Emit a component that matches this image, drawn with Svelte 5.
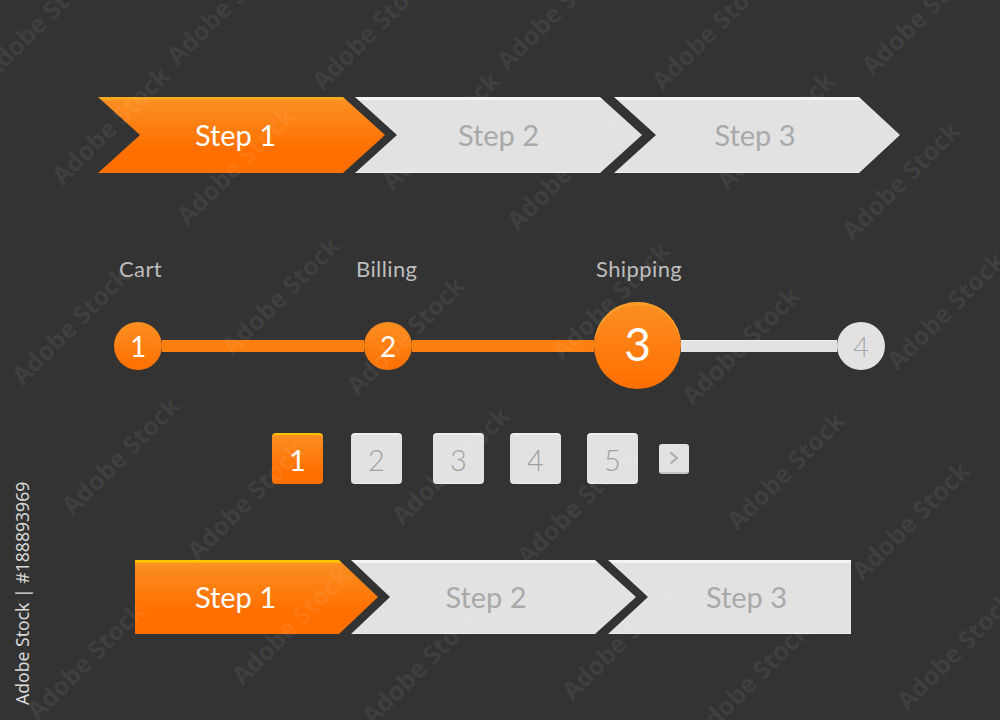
<script>
  const marks = [
    [40,20],[225,5],[370,30],[555,10],[710,30],[920,15],
    [110,125],[235,165],[440,130],[565,170],[775,130],[900,180],
    [70,325],[280,295],[405,335],[610,300],[740,345],[945,310],
    [120,455],[245,500],[450,465],[575,505],[785,470],[910,520],
    [85,660],[290,625],[420,665],[620,640],[750,680],[955,650]
  ]
  const steps = ['Step 1', 'Step 2', 'Step 3']
  const pages = [1, 2, 3, 4, 5]
</script>

<main class="page">
  <div class="steps top">
    {#each steps as step, i}
      <div class="step" class:active={i === 0}>{step}</div>
    {/each}
  </div>

  <div class="labels">
    <span class="cart">Cart</span>
    <span class="billing">Billing</span>
    <span>Shipping</span>
  </div>

  <div class="progress">
    <div class="dot on">1</div>
    <div class="seg on s1"></div>
    <div class="dot on">2</div>
    <div class="seg on s2"></div>
    <div class="dot on big">3</div>
    <div class="seg s3"></div>
    <div class="dot">4</div>
  </div>

  <div class="pager">
    {#each pages as p, i}
      <div class="page-btn p{p}" class:on={i === 0}>{p}</div>
    {/each}
    <div class="next">
      <svg width="12" height="14" viewBox="0 0 12 14"><path d="M2.5 1.5 9 7 2.5 12.5" fill="none" stroke="#aaa" stroke-width="2"/></svg>
    </div>
  </div>

  <div class="steps bottom">
    {#each steps as step, i}
      <div class="step" class:active={i === 0}>{step}</div>
    {/each}
  </div>
</main>

<div class="marks">
  {#each marks as [x, y]}
    <span class="mark" style="left:{x}px;top:{y}px">Adobe Stock</span>
  {/each}
</div>
<div class="side">Adobe Stock | #188893969</div>

<style>
  :global(body) {
    background: #333333;
  }
  .page {
    width: 1000px;
    height: 720px;
    box-sizing: border-box;
    padding-top: 97px;
    overflow: hidden;
    font-family: Lato, "Noto Sans", sans-serif;
    background: #333333;
  }

  .steps {
    display: flex;
    height: 76px;
  }
  .step {
    display: flex;
    align-items: center;
    justify-content: center;
    height: 100%;
    box-sizing: border-box;
    padding-bottom: 2px;
    font-size: 29px;
    color: #a9a9a9;
    background: linear-gradient(#f4f4f4 0 3px, #e2e2e2 3px, #e2e2e2 calc(100% - 1px), #ededed calc(100% - 1px));
  }
  .step.active {
    color: #fff;
    background: linear-gradient(#ffa51e 0 3px, #fb8f22 3px, #ff6f00 70%);
  }

  .top {
    margin-left: 98px;
  }
  .top .step {
    width: 287px;
    clip-path: polygon(0 0, 245px 0, 100% 50%, 245px 100%, 0 100%, 42px 50%);
  }
  .top .step.active {
    padding-right: 12px;
  }
  .top .step + .step {
    margin-left: -30px;
  }
  .top .step:last-child {
    margin-left: -28px;
    width: 286px;
    padding-right: 4px;
  }

  .bottom {
    height: 74px;
    margin-top: 76px;
    margin-left: 135px;
  }
  .bottom .step {
    width: 285px;
    padding-right: 15px;
    clip-path: polygon(0 0, 244px 0, 100% 50%, 244px 100%, 0 100%, 39px 50%);
  }
  .bottom .step.active {
    width: 243px;
    padding-right: 42px;
    background: linear-gradient(#ffc000 0 3px, #fb8f22 3px, #ff6f00 70%);
    clip-path: polygon(0 0, 204px 0, 100% 50%, 204px 100%, 0 100%);
  }
  .bottom .step:nth-child(2) {
    margin-left: -27px;
  }
  .bottom .step:last-child {
    margin-left: -28px;
    width: 243px;
    clip-path: polygon(0 0, 100% 0, 100% 100%, 0 100%, 40px 50%);
    padding-right: 0;
    padding-left: 34px;
  }

  .labels {
    display: flex;
    margin: 82px 0 0 119px;
    height: 28px;
    line-height: 28px;
    font-size: 22px;
    letter-spacing: 0.4px;
    color: #bdbdbd;
  }
  .cart {
    width: 237px;
  }
  .billing {
    width: 240px;
  }

  .progress {
    display: flex;
    align-items: center;
    height: 87px;
    margin: 19px 0 0 114px;
  }
  .dot {
    flex: none;
    width: 48px;
    height: 48px;
    border-radius: 50%;
    display: flex;
    align-items: center;
    justify-content: center;
    font-size: 28px;
    font-weight: 300;
    color: #a8a8a8;
    background: #e2e2e2;
  }
  .dot.on {
    color: #fff;
    font-weight: 400;
    background: linear-gradient(#fb8f22, #ff6f00);
  }
  .dot.big {
    width: 87px;
    height: 87px;
    font-size: 46px;
    font-weight: 400;
    line-height: 1;
    padding-bottom: 4px;
    box-sizing: border-box;
    background: linear-gradient(#fb8f22, #ff7d10 55%, #ff6f00);
    box-shadow: inset 0 3px 0 #fb9c2a;
  }
  .seg {
    height: 12px;
    background: #e2e2e2;
    box-shadow: inset 0 1px 0 #f2f2f2;
  }
  .seg.on {
    background: #fb8010;
    box-shadow: none;
  }
  .s1 {
    width: 202px;
  }
  .s2 {
    width: 182px;
  }
  .s3 {
    width: 156px;
  }

  .pager {
    display: flex;
    align-items: center;
    margin: 44px 0 0 272px;
    height: 51px;
  }
  .page-btn {
    width: 51px;
    height: 51px;
    box-sizing: border-box;
    border-radius: 4px;
    display: flex;
    align-items: center;
    justify-content: center;
    font-size: 29px;
    font-weight: 300;
    color: #9f9f9f;
    background: #e2e2e2;
    border-top: 2px solid #f0f0f0;
    border-bottom: 1px solid #ededed;
  }
  .page-btn.on {
    color: #fff;
    font-weight: 400;
    background: linear-gradient(#fb8f22, #ff6f00 75%);
    border: 0;
    border-top: 2px solid #ffc000;
  }
  .p2 {
    margin-left: 28px;
  }
  .p3 {
    margin-left: 31px;
  }
  .p4 {
    margin-left: 26px;
  }
  .p5 {
    margin-left: 26px;
  }
  .next {
    width: 30px;
    height: 30px;
    margin-left: 21px;
    box-sizing: border-box;
    border-radius: 3px;
    display: flex;
    align-items: center;
    justify-content: center;
    background: #e2e2e2;
    border-bottom: 2px solid #c4c4c4;
  }

  .marks {
    position: absolute;
    inset: 0;
    width: 1000px;
    height: 720px;
    overflow: hidden;
    pointer-events: none;
  }
  .mark {
    position: absolute;
    transform: translate(-50%, -50%) rotate(-45deg);
    white-space: nowrap;
    font-family: "Open Sans", sans-serif;
    font-weight: 700;
    font-size: 25px;
    color: rgba(255, 255, 255, 0.07);
  }
  .side {
    position: absolute;
    left: 11px;
    top: 482px;
    height: 223px;
    writing-mode: vertical-rl;
    transform: rotate(180deg);
    white-space: nowrap;
    font-family: "Noto Sans", sans-serif;
    font-size: 17.6px;
    line-height: 22px;
    color: #d8d8d8;
  }
</style>
